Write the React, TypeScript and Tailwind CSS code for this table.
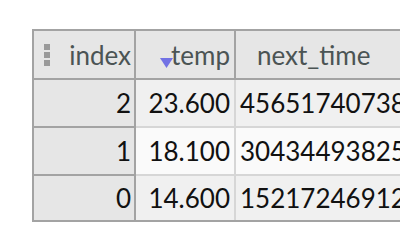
import React from "react";

const rows = [
  { index: "2", temp: "23.600", next: "45651740738", bg: "bg-[#f0f0f0]" },
  { index: "1", temp: "18.100", next: "30434493825", bg: "bg-[#fafafa]" },
  { index: "0", temp: "14.600", next: "15217246912", bg: "bg-[#f0f0f0]" },
];

function Grip() {
  return (
    <div className="flex flex-col gap-[2px]">
      <div className="w-[6px] h-[6px] bg-[#9a9a9a]" />
      <div className="w-[6px] h-[6px] bg-[#9a9a9a]" />
      <div className="w-[6px] h-[6px] bg-[#9a9a9a]" />
    </div>
  );
}

export default function App() {
  return (
    <div
      className="w-[400px] h-[246px] overflow-hidden bg-white pl-[32px] pt-[29px]"
      style={{ fontFamily: "Lato, 'Open Sans', sans-serif" }}
    >
      <div className="w-[600px] border-l-2 border-t-2 border-b-2 border-[#a3a3a3] text-[26px]">
        {/* header */}
        <div className="flex h-[49px] border-b-2 border-[#a3a3a3] bg-[#e6e6e6] text-[#4b5454]">
          <div className="w-[102px] shrink-0 border-r-2 border-[#a3a3a3] flex items-center pl-[10px] pr-[3px]">
            <Grip />
            <span className="ml-auto leading-none">index</span>
          </div>
          <div className="w-[100px] shrink-0 border-r-2 border-[#a3a3a3] flex items-center justify-end pr-[4px]">
            {/* sort-descending marker */}
            <svg width="13" height="10" viewBox="0 0 13 10" className="mt-[17px] mr-[-2px]">
              <polygon points="0,0 13,0 6.5,10" fill="#7272e4" />
            </svg>
            <span className="leading-none">temp</span>
          </div>
          <div className="flex-1 flex items-center pl-[21px]">
            <span className="leading-none">next_time</span>
          </div>
        </div>
        {rows.map((r, i) => (
          <div
            key={r.index}
            className={`flex ${i < 2 ? "h-[48px] border-b-2" : "h-[44px]"} border-[#d6d6d6] text-[#111]`}
          >
            <div
              className={`w-[102px] shrink-0 border-r-2 border-[#a3a3a3] bg-[#e6e6e6] flex items-center justify-end pr-[3px] ${
                i < 2 ? "-mb-[2px] border-b-2" : ""
              }`}
            >
              <span className="leading-none">{r.index}</span>
            </div>
            <div className={`w-[100px] shrink-0 border-r-2 border-[#d6d6d6] ${r.bg} flex items-center justify-end pr-[4px]`}>
              <span className="leading-none">{r.temp}</span>
            </div>
            <div className={`flex-1 ${r.bg} flex items-center pl-[4px]`}>
              <span className="leading-none">{r.next}</span>
            </div>
          </div>
        ))}
      </div>
    </div>
  );
}
